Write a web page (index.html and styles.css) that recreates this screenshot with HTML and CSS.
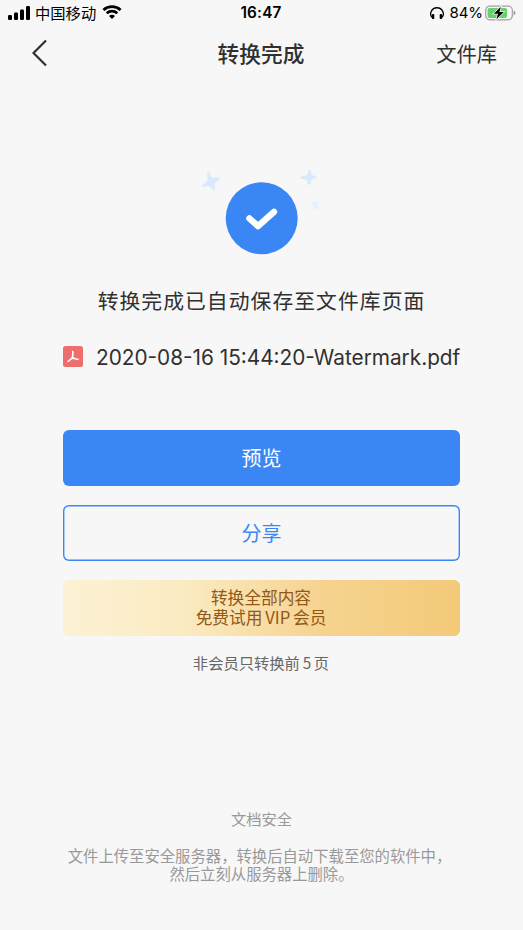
FILE: index.html
```html
<!DOCTYPE html>
<html lang="zh-CN">
<head>
<meta charset="utf-8">
<title>转换完成</title>
<link rel="stylesheet" href="styles.css">
</head>
<body>
<header class="status">
  <div class="status-left">
    <svg class="signal" width="23" height="14" viewBox="0 0 23 14"><rect x="0" y="9" width="4" height="5" rx="1.2"/><rect x="6" y="6.5" width="4" height="7.5" rx="1.2"/><rect x="12" y="3.5" width="4" height="10.5" rx="1.2"/><rect x="18" y="0" width="4" height="14" rx="1.2"/></svg>
    <span class="carrier">中国移动</span>
    <svg class="wifi" width="20" height="14" viewBox="0 0 20 14"><path d="M1.400 4.900C6.200.4 13.800.4 18.600 4.900M4.700 8.300C7.700 5.500 12.300 5.500 15.300 8.300" fill="none" stroke="#000" stroke-width="2.700"/><path d="M10 14 7 10.900C8.700 9.400 11.300 9.400 13 10.900Z"/></svg>
  </div>
  <span class="clock">16:47</span>
  <div class="status-right">
    <svg class="headphones" width="14" height="13" viewBox="0 0 14 13"><path d="M3.200 11.300C.3 9.300.3 6.500 1.200 4.500 3.500-.5 10.500-.5 12.800 4.500 13.700 6.500 13.700 9.300 10.800 11.300" fill="none" stroke="#000" stroke-width="1.300"/><rect x="2" y="7" width="2.300" height="5" rx=".8"/><rect x="9.700" y="7" width="2.300" height="5" rx=".8"/></svg>
    <span class="percent">84%</span>
    <svg class="battery" width="31" height="16" viewBox="0 0 31 16"><rect x=".7" y="1.200" width="26.600" height="13.600" rx="4" fill="#fafafa" stroke="#a0a0a0" stroke-width="1.200"/><rect x="2.500" y="3" width="19.500" height="10" rx="2" fill="#65d16b"/><path d="M28.700 5.500Q30.500 6.200 30.500 8T28.700 10.500Z" fill="#999"/><path d="M15.800 1.800 8.800 8.800H13L11.400 14.200 18.800 7H14.500Z" stroke="#f7f7f7" stroke-width="1.400" paint-order="stroke"/></svg>
  </div>
</header>
<nav class="nav">
  <svg class="back" width="16" height="28" viewBox="0 0 16 28"><path d="M14 1.500 1.500 14 14 26.500" fill="none" stroke="#303030" stroke-width="2.200"/></svg>
  <h1 class="title">转换完成</h1>
  <a class="library">文件库</a>
</nav>
<main class="content">
  <svg class="hero" width="130" height="92" viewBox="0 0 130 92">
    <circle cx="65.700" cy="54.300" r="36" fill="#3b86f5"/>
    <path d="M53.500 54.500 62 62.200 78 47.800" fill="none" stroke="#fff" stroke-width="6.400" stroke-linecap="round" stroke-linejoin="round"/>
    <path d="M12.200 7.500C13.500 7.500 14.800 12.500 16.500 13.500 18.300 14.200 24 12.800 24.500 14.500 24 16 19.500 18 18.700 20 18 22 20 25.800 18.500 26.500 16.500 26.500 14.500 22.500 13 22 11 21.500 6.500 24 5.500 22.500 5.500 20.800 10.500 18.500 11.300 16.500 12 14 10.500 8 12.200 7.500Z" fill="#dbe9fe"/>
    <path d="M113.600 5.500C115 5.500 115 10 116.200 11 117.300 12 120.500 11.700 120.700 13 120.500 14.500 116.500 15.200 115.500 16.300 114.500 17.500 115 21 113.500 21.200 112 21 111.500 17 110.300 16 109 15 104 15 103.700 13.700 104 12.300 109.200 12 110.800 10.800 112.200 9.500 112.200 5.700 113.600 5.500Z" fill="#dbe9fe"/>
    <path d="M114.500 36.300 118.200 37.800 123 36.200 121.300 41 125 45 119.900 43.900 116.300 47.200 117.200 42.200Z" fill="#e7f0fd"/>
  </svg>
  <p class="message">转换完成已自动保存至文件库页面</p>
  <div class="file">
    <svg class="pdf" width="20" height="21" viewBox="0 0 20 21"><rect width="20" height="21" rx="2.500" fill="#ee6e6d"/><path d="M9.700 5.500C10.500 7 9.200 9.500 9.600 10.800 10.200 12.500 13 13.300 15 13.400M9.600 11 8.700 12.400 5 15.500M8.500 12.700C10 12 12 12.400 13 12.900" fill="none" stroke="#fff" stroke-width="1.600" stroke-linecap="round"/></svg>
    <span class="filename">2020-08-16 15:44:20-Watermark.pdf</span>
  </div>
  <div class="actions">
    <button class="btn primary">预览</button>
    <button class="btn outline">分享</button>
    <button class="btn vip"><span>转换全部内容</span><span class="trial">免费试用 VIP 会员</span></button>
  </div>
  <p class="note">非会员只转换前 5 页</p>
</main>
<footer class="footer">
  <h2 class="footer-title">文档安全</h2>
  <p class="footer-text"><span class="first-line">文件上传至安全服务器，转换后自动下载至您的软件中，</span><br>然后立刻从服务器上删除。</p>
</footer>
</body>
</html>
```
FILE: styles.css
```css
* { box-sizing: border-box; }
body {
  margin: 0;
  height: 930px;
  display: flex;
  flex-direction: column;
  overflow: hidden;
  background: #f7f7f7;
  color: #303030;
  font-family: "Noto Sans CJK SC", sans-serif;
}
h1, h2, p { margin: 0; font-weight: 400; }
svg { display: block; flex: none; }
.status {
  height: 26px;
  padding: 0 7px 0 8px;
  display: grid;
  grid-template-columns: 1fr auto 1fr;
  align-items: center;
  color: #000;
  line-height: 26px;
}
.status-left, .status-right { display: flex; align-items: center; height: 26px; }
.status-right { justify-content: flex-end; }
.carrier { margin-left: 4px; margin-top: -2px; font-size: 15.300px; }
.wifi { margin-left: 6px; margin-top: -2px; }
.clock { margin: 0 2px 0 0; font: 600 15.300px/26px Inter, sans-serif; letter-spacing: .2px; }
.percent { margin: 0 2px 0 6px; font: 15px/26px Inter, sans-serif; letter-spacing: -.1px; }
.nav {
  height: 54px;
  padding: 0 26px 0 32px;
  display: grid;
  grid-template-columns: 1fr auto 1fr;
  align-items: center;
}
.title { font-size: 21.700px; font-weight: 500; line-height: 54px; margin: -1px 0 0 -7px; }
.library { justify-self: end; font-size: 20.300px; line-height: 54px; }
.content { padding: 84px 63px 0; }
.hero { margin-left: 133px; }
.message {
  margin-top: 28px;
  font-size: 20.800px;
  letter-spacing: 1.050px;
  line-height: 32px;
  text-align: center;
  white-space: nowrap;
}
.file { height: 32px; margin-top: 24px; display: flex; align-items: center; }
.filename {
  margin: 3px 0 0 13px;
  font: 20.770px/32px Inter, sans-serif;
  white-space: nowrap;
}
.actions { margin-top: 58px; display: grid; gap: 19px; }
.btn {
  height: 56px;
  padding: 0 0 2px;
  border: 0;
  border-radius: 6px;
  font-family: inherit;
  font-size: 20px;
  text-align: center;
}
.primary { background: #3b86f5; color: #fff; }
.outline { box-shadow: inset 0 0 0 1.400px #3b86f5; background: transparent; color: #3b86f5; }
.vip {
  display: flex;
  flex-direction: column;
  align-items: center;
  justify-content: center;
  padding: 0 1px 1px 0;
  background: linear-gradient(90deg, #fdf1d5, #fbebc2 30%, #f6d390 65%, #f3ca78);
  color: #935816;
  font-size: 16.700px;
  line-height: 19.500px;
}
.trial { word-spacing: -1px; }
.note {
  margin-top: 14px;
  padding-right: 1px;
  font-size: 15.300px;
  line-height: 24px;
  text-align: center;
  color: #666;
  word-spacing: -.7px;
}
.footer { margin-top: auto; padding-bottom: 48px; text-align: center; color: #999; }
.footer-title { font-size: 15.300px; line-height: 24px; }
.footer-text { margin-top: 17px; font-size: 15.350px; line-height: 17.500px; white-space: nowrap; }
.first-line { margin-right: 4px; }
```
